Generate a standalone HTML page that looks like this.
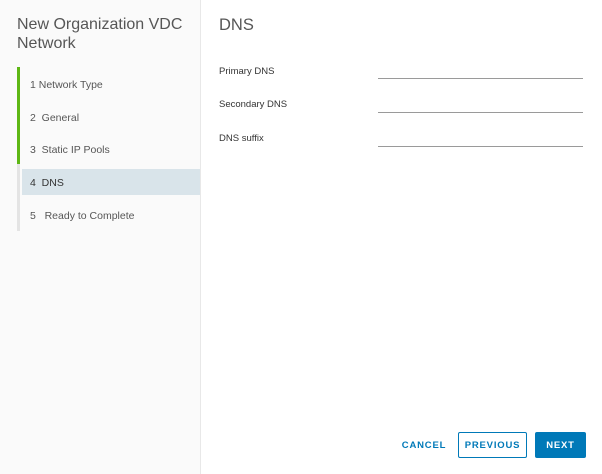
<!DOCTYPE html>
<html><head><style>
body{margin:0;width:602px;height:474px;background:#fff;font-family:"Liberation Sans",sans-serif;position:relative;overflow:hidden}
.left{position:absolute;left:0;top:0;width:200px;height:474px;background:#fafafa;border-right:1px solid #e8e8e8}
.title{position:absolute;left:17px;top:15px;font-size:16px;line-height:19px;color:#565656}
.bar{position:absolute;left:17px;width:3px}
.step{position:absolute;left:30px;font-size:10.5px;color:#565656}
.active{position:absolute;left:22px;top:169px;width:178px;height:26px;background:#d9e4ea}
h2{position:absolute;left:219px;top:16px;margin:0;font-weight:normal;font-size:16.5px;color:#565656}
.lbl{position:absolute;left:219px;font-size:9.5px;color:#333}
.line{position:absolute;left:378px;width:205px;height:1px;background:#9a9a9a}
.btn{position:absolute;font-size:9.5px;font-weight:bold;letter-spacing:0.8px;text-align:center;box-sizing:border-box}
</style></head><body>
<div class="left">
<div class="title">New Organization VDC<br>Network</div>
<div class="bar" style="top:67px;height:97px;background:#5eb715"></div>
<div class="bar" style="top:164px;height:67px;background:#e4e4e4"></div>
<div class="active"></div>
<div class="step" style="top:79px">1 Network Type</div>
<div class="step" style="top:112px">2 &nbsp;General</div>
<div class="step" style="top:144px">3 &nbsp;Static IP Pools</div>
<div class="step" style="top:177px;color:#333">4 &nbsp;DNS</div>
<div class="step" style="top:210px">5 &nbsp;&nbsp;Ready to Complete</div>
</div>
<h2>DNS</h2>
<div class="lbl" style="top:66px">Primary DNS</div>
<div class="line" style="top:78px"></div>
<div class="lbl" style="top:99px">Secondary DNS</div>
<div class="line" style="top:112px"></div>
<div class="lbl" style="top:133px">DNS suffix</div>
<div class="line" style="top:146px"></div>
<div class="btn" style="left:398px;top:440px;width:52px;color:#0079b8">CANCEL</div>
<div class="btn" style="left:458px;top:432px;width:69px;height:26px;line-height:25px;border:1px solid #0079b8;border-radius:2px;color:#0079b8">PREVIOUS</div>
<div class="btn" style="left:535px;top:432px;width:51px;height:26px;line-height:27px;background:#0079b8;border-radius:2px;color:#fff">NEXT</div>
</body></html>
